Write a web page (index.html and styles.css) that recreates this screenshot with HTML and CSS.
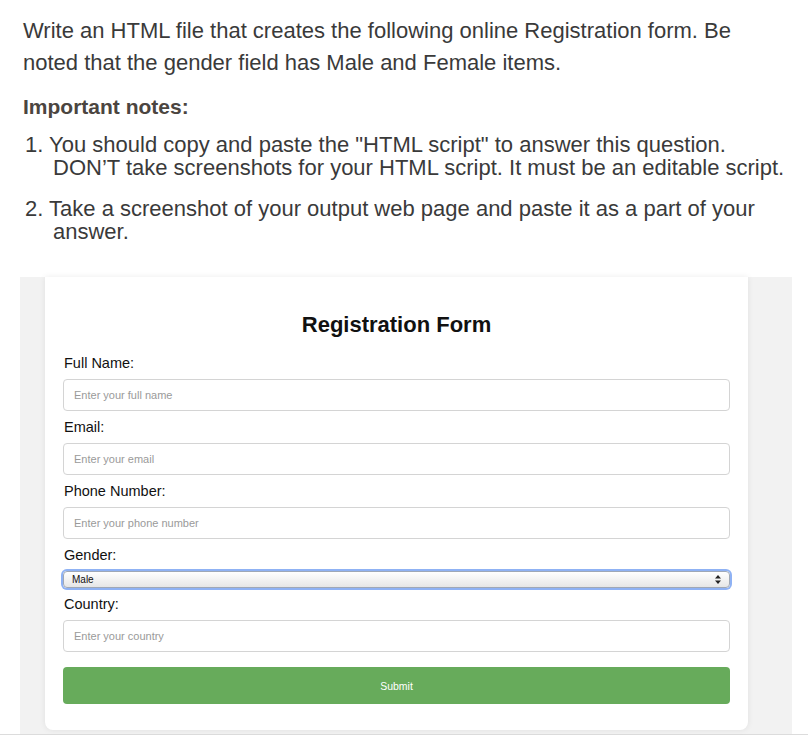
FILE: index.html
```html
<html>
<head>
    <link rel="stylesheet" href="styles.css">
</head>

<body>
    <div class="question">
        <p class="intro">Write an HTML file that creates the following online Registration form. Be<br>noted that the gender field has Male and Female items.</p>
        <h4 class="notesTitle">Important notes:</h4>
        <p class="note">1. You should copy and paste the "HTML script" to answer this question.<br>DON’T take screenshots for your HTML script. It must be an editable script.</p>
        <p class="note">2. Take a screenshot of your output web page and paste it as a part of your<br>answer.</p>
    </div>

    <div class="shot">
        <form class="card">
            <h2 class="formTitle">Registration Form</h2>

            <label class="fieldLabel" for="fullName">Full Name:</label>
            <input class="field" type="text" id="fullName" placeholder="Enter your full name">

            <label class="fieldLabel" for="email">Email:</label>
            <input class="field" type="email" id="email" placeholder="Enter your email">

            <label class="fieldLabel" for="phone">Phone Number:</label>
            <input class="field" type="tel" id="phone" placeholder="Enter your phone number">

            <label class="fieldLabel" for="gender">Gender:</label>
            <div class="selectWrap">
                <select class="genderSelect" id="gender">
                    <option>Male</option>
                    <option>Female</option>
                </select>
                <svg class="selectArrows" width="6" height="9" viewBox="0 0 6 9">
                    <path d="M3 0 L6 3.5 L0 3.5 Z" fill="#222"/>
                    <path d="M3 9 L6 5.5 L0 5.5 Z" fill="#222"/>
                </svg>
            </div>

            <label class="fieldLabel" for="country">Country:</label>
            <input class="field" type="text" id="country" placeholder="Enter your country">

            <button class="submitBtn" type="button">Submit</button>
        </form>
    </div>
</body>

</html>
```

FILE: styles.css
```css
body {
    margin: 0px;
    background-color: #ffffff;
    font-family: "Liberation Sans", Arial, Helvetica, sans-serif;
}
.question {
    padding: 15px 10px 0px 23px;
    color: #3a3a3a;
    font-size: 22px;
    white-space: nowrap;
}
.intro {
    margin: 0px;
    line-height: 32px;
}
.notesTitle {
    margin: 16px 0px 0px 0px;
    font-size: 21px;
    line-height: 24px;
    color: #4b4540;
}
.note {
    margin: 14px 0px 0px 0px;
    line-height: 23px;
    padding-left: 30px;
    text-indent: -28px;
}
.note + .note {
    margin-top: 18px;
}
.shot {
    margin-top: 34px;
    padding: 0px 60px 4px 45px;
    background: linear-gradient(to right, #ffffff 20px, #f2f2f2 20px, #f2f2f2 792px, #ffffff 792px);
    border-bottom: 1px solid #dcdcdc;
}
.card {
    margin: 0px;
    padding: 35px 18px 26px 18px;
    background-color: #ffffff;
    border-radius: 0px 0px 8px 8px;
    box-shadow: 0px 0px 6px rgba(0, 0, 0, 0.08);
    color: #111111;
}
.formTitle {
    margin: 0px 0px 17px 0px;
    text-align: center;
    font-size: 22px;
    line-height: 26px;
}
.fieldLabel {
    display: block;
    font-size: 14.5px;
    line-height: 17px;
    margin-bottom: 7px;
    padding-left: 1px;
}
.field {
    display: block;
    box-sizing: border-box;
    width: 100%;
    height: 32px;
    margin: 0px 0px 8px 0px;
    padding: 0px 10px;
    border: 1px solid #d4d4d4;
    border-radius: 4px;
    font-family: "Liberation Sans", Arial, sans-serif;
    font-size: 11px;
    color: #333333;
}
.field::placeholder {
    color: #9a9a9a;
}
.selectWrap {
    position: relative;
    margin: 0px 0px 8px 0px;
}
.genderSelect {
    display: block;
    box-sizing: border-box;
    width: 100%;
    height: 17px;
    padding: 0px 8px;
    -webkit-appearance: none;
    appearance: none;
    border: 1px solid #9fa8b6;
    border-radius: 4px;
    background: linear-gradient(to bottom, #ffffff, #e6e6e6);
    box-shadow: 0px 0px 0px 2px #8fb2f4;
    font-family: "Liberation Sans", Arial, sans-serif;
    font-size: 10px;
    color: #111111;
    outline: none;
}
.selectArrows {
    position: absolute;
    right: 9px;
    top: 4px;
}
.submitBtn {
    display: block;
    width: 100%;
    height: 37px;
    margin-top: 15px;
    border: none;
    border-radius: 4px;
    background-color: #67ab5b;
    color: #ffffff;
    font-family: "Liberation Sans", Arial, sans-serif;
    font-size: 10.5px;
}
```
